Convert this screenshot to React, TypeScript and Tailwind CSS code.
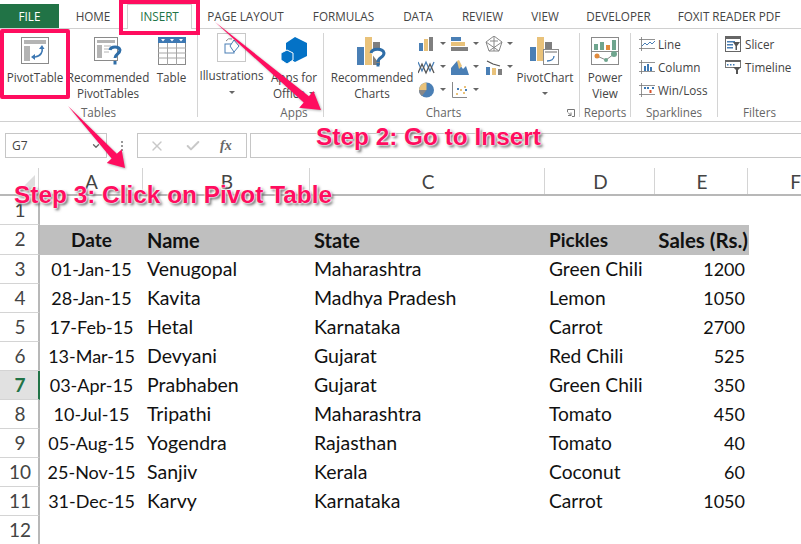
import React from 'react';
import { X, Check, ChevronDown } from 'lucide-react';

const tabs = [
  { label: 'HOME', w: 'w-[68px]' },
  { label: 'INSERT', w: 'w-[65px]', active: true },
  { label: 'PAGE LAYOUT', w: 'w-[107px]' },
  { label: 'FORMULAS', w: 'w-[89px]' },
  { label: 'DATA', w: 'w-[60px]' },
  { label: 'REVIEW', w: 'w-[69px]' },
  { label: 'VIEW', w: 'w-[56px]' },
  { label: 'DEVELOPER', w: 'w-[91px]' },
  { label: 'FOXIT READER PDF', w: 'w-[130px]' },
];

const columns = [
  { label: 'A', w: 'w-[104px]' },
  { label: 'B', w: 'w-[167px]' },
  { label: 'C', w: 'w-[235px]' },
  { label: 'D', w: 'w-[110px]' },
  { label: 'E', w: 'w-[93px]' },
  { label: 'F', w: 'w-[94px]' },
];

const sales = [
  ['01-Jan-15', 'Venugopal', 'Maharashtra', 'Green Chili', '1200'],
  ['28-Jan-15', 'Kavita', 'Madhya Pradesh', 'Lemon', '1050'],
  ['17-Feb-15', 'Hetal', 'Karnataka', 'Carrot', '2700'],
  ['13-Mar-15', 'Devyani', 'Gujarat', 'Red Chili', '525'],
  ['03-Apr-15', 'Prabhaben', 'Gujarat', 'Green Chili', '350'],
  ['10-Jul-15', 'Tripathi', 'Maharashtra', 'Tomato', '450'],
  ['05-Aug-15', 'Yogendra', 'Rajasthan', 'Tomato', '40'],
  ['25-Nov-15', 'Sanjiv', 'Kerala', 'Coconut', '60'],
  ['31-Dec-15', 'Karvy', 'Karnataka', 'Carrot', '1050'],
];

const Caret = () => <span className="inline-block w-0 h-0 border-x-[3px] border-x-transparent border-t-[3px] border-t-[#666]" />;

const Sep = () => <div className="w-px my-1 bg-[#d4d4d4] shrink-0" />;

const GroupLabel = ({ children }: { children: React.ReactNode }) => (
  <div className="h-4 leading-[15px] text-center text-[11.7px] text-[#666] whitespace-nowrap">{children}</div>
);

const BigButton = ({ w, icon, lines, caret, inlineCaret }: { w: string; icon: React.ReactNode; lines: string[]; caret?: boolean; inlineCaret?: boolean }) => (
  <div className={`${w} flex flex-col items-center shrink-0`}>
    <div className="h-[40px] pt-2 flex justify-center">{icon}</div>
    {lines.map((l, i) => (
      <div key={l} className="h-4 leading-4 text-[11.7px] text-[#444] whitespace-nowrap flex items-center gap-[4px]">
        {l}
        {inlineCaret && i === lines.length - 1 && <Caret />}
      </div>
    ))}
    {caret && <div className="h-4 flex items-center"><Caret /></div>}
  </div>
);

const PivotIcon = () => (
  <svg width="28" height="27" viewBox="0 0 28 27">
    <rect x="0.5" y="0.5" width="27" height="26" fill="#fff" stroke="#8a8a8a" />
    <rect x="3" y="3" width="22" height="4" fill="#b4b4b4" />
    <rect x="3" y="9" width="6" height="15" fill="#b4b4b4" />
    <path d="M21 10c1 5-1 9-7 10" fill="none" stroke="#3d78b3" strokeWidth="1.6" />
    <path d="M21 8l-3 4h5.500zM10 20l4-3v6z" fill="#3d78b3" />
  </svg>
);

const RecPivotIcon = () => (
  <svg width="28" height="29" viewBox="0 0 28 29">
    <rect x="0.5" y="0.500" width="23" height="23" fill="#fff" stroke="#8a8a8a" />
    <rect x="3" y="3" width="18" height="3" fill="#b4b4b4" />
    <rect x="3" y="8" width="5" height="13" fill="#b4b4b4" />
    <path d="M10 9h7M10 12h5M10 15h5" stroke="#b4b4b4" />
    <path d="M16 13c1-4 9-4 10 0 0 4-5 4-5 8" fill="none" stroke="#2f6ea8" strokeWidth="3" />
    <rect x="19.500" y="24" width="3" height="3.500" fill="#2f6ea8" />
  </svg>
);

const TableIcon = () => (
  <svg width="28" height="28" viewBox="0 0 28 28">
    <rect x="0.5" y="0.5" width="27" height="27" fill="#fff" stroke="#8a8a8a" />
    <rect x="0" y="0" width="28" height="6" fill="#3d78b3" />
    <path d="M0 11h28M0 16h28M0 21h28M9.500 6v22M18.500 6v22" stroke="#a6a6a6" />
    <path d="M3 2h4l-2 2.500zM12 2h4l-2 2.500zM21 2h4l-2 2.500z" fill="#fff" />
  </svg>
);

const ShapesIcon = () => (
  <svg width="29" height="29" viewBox="0 0 29 29">
    <rect x="0.5" y="0.5" width="28" height="28" fill="#fff" stroke="#c8c8c8" />
    <rect x="8" y="11" width="9" height="9" fill="none" stroke="#4a7fb5" />
    <path d="M17 7l5 6-5 6-4-6z" fill="#fff" stroke="#4a7fb5" />
    <path d="M9 8a5 5 0 0 1 6-2" fill="none" stroke="#888" />
  </svg>
);

const AppsIcon = () => (
  <svg width="28" height="29" viewBox="0 0 28 29">
    <path d="M15 0l12 6v13l-12 6-5-3v-7l-4-2V6z" fill="#0472c6" />
    <path d="M7 13l6 3v7l-6 4-6-4v-7z" fill="#0472c6" stroke="#fff" />
  </svg>
);

const RecChartIcon = () => (
  <svg width="30" height="30" viewBox="0 0 30 30">
    <rect x="0" y="10" width="7" height="18" fill="#4a7fb5" />
    <rect x="8" y="0" width="7" height="28" fill="#e9c27a" />
    <rect x="16" y="5" width="7" height="23" fill="#7f7f7f" />
    <path d="M14 16c1-5 12-5 13 0 0 5-6 4-6 9" fill="#fff" stroke="#2f6ea8" strokeWidth="3" />
    <rect x="19.500" y="26" width="3" height="3.500" fill="#2f6ea8" />
  </svg>
);

const PivotChartIcon = () => (
  <svg width="30" height="29" viewBox="0 0 30 29">
    <rect x="0" y="10" width="6" height="14" fill="#4a7fb5" />
    <rect x="7" y="0" width="7" height="24" fill="#e9c27a" />
    <rect x="15" y="5" width="7" height="8" fill="#7f7f7f" />
    <rect x="13.500" y="12.500" width="15" height="15" fill="#fff" stroke="#8a8a8a" />
    <rect x="15" y="14" width="12" height="2" fill="#b4b4b4" />
    <path d="M17 24c4 0 7-2 7-5" fill="none" stroke="#3d78b3" strokeWidth="1.300" />
  </svg>
);

const PowerViewIcon = () => (
  <svg width="28" height="28" viewBox="0 0 28 28">
    <rect x="0.5" y="0.5" width="27" height="27" fill="#fff" stroke="#8a8a8a" />
    <path d="M0 14.500h28" stroke="#8a8a8a" />
    <rect x="3" y="7" width="4" height="6" fill="#6fa58e" />
    <rect x="9" y="5" width="4" height="8" fill="#6fa58e" />
    <rect x="15" y="8" width="4" height="5" fill="#e08a3c" />
    <rect x="21" y="3" width="4" height="10" fill="#6fa58e" />
    <path d="M6 19l9 4 8-6" fill="none" stroke="#888" />
    <circle cx="6" cy="19" r="2.500" fill="#e08a3c" />
    <circle cx="15" cy="23" r="2" fill="#6fa58e" />
    <circle cx="23" cy="17" r="3" fill="#6fa58e" />
  </svg>
);

// the nine small chart buttons in the Charts group
const smallCharts: React.ReactNode[] = [
  <g key="col"><rect x="1" y="7" width="4" height="8" fill="#4a7fb5" /><rect x="6" y="3" width="4" height="12" fill="#e9c27a" /><rect x="11" y="1" width="4" height="14" fill="#7f7f7f" /></g>,
  <g key="bar"><rect x="0" y="1" width="10" height="4" fill="#4a7fb5" /><rect x="0" y="6" width="14" height="4" fill="#e9c27a" /><rect x="0" y="11" width="17" height="4" fill="#7f7f7f" /></g>,
  <g key="radar" fill="none" stroke="#888"><path d="M9 0l8 6-3 9H4L1 6z" /><path d="M9 0v15M1 6l13 9M17 6L4 15M5 5l8 0" /></g>,
  <g key="line" fill="none" strokeWidth="1.300"><path d="M0 3l4 9 4-9 4 9 4-9" stroke="#4a7fb5" /><path d="M0 14l4-9 4 9 4-9 4 9" stroke="#555" /></g>,
  <g key="area"><path d="M0 16V9l6-7 6 8 3-3 3 9z" fill="#4a7fb5" /><path d="M6 2l2-1 3 6-3 3z" fill="#e9c27a" /></g>,
  <g key="combo"><rect x="1" y="8" width="4" height="8" fill="#4a7fb5" /><rect x="7" y="9" width="4" height="7" fill="#e9c27a" /><rect x="13" y="10" width="4" height="6" fill="#7f7f7f" /><path d="M2 2l6 3 7 2" fill="none" stroke="#555" strokeWidth="1.300" /></g>,
  <g key="pie"><circle cx="8.500" cy="8" r="7.500" fill="#4a7fb5" /><path d="M8.500 8V.5A7.500 7.500 0 0 0 1 8z" fill="#e9c27a" /><path d="M8.500 8L1 8a7.500 7.500 0 0 0 3 6z" fill="#888" /></g>,
  <g key="scatter"><path d="M1.500 0v15.500H16" fill="none" stroke="#888" /><path d="M5 11h2v2H5zM9 7h2v2H9zM13 4h2v2h-2zM12 10h2v2h-2z" fill="#e9c27a" /><path d="M6 6h2v2H6zM14 7h2v2h-2z" fill="#4a7fb5" /></g>,
];

const Spark = ({ kind }: { kind: string }) => (
  <svg width="16" height="14" viewBox="0 0 16 14" className="shrink-0">
    <path d="M2.500 0v14M0 11.500h16M0 2.500h16" fill="none" stroke="#777" strokeWidth="0.8" />
    {kind === 'line' && <path d="M3 9l3-3 2 2 3-3 2 2 3-3" fill="none" stroke="#4a7fb5" />}
    {kind === 'column' && <path d="M5 6h2v5H5zM8 4h2v7H8zM11 7h2v4h-2z" fill="#3d78b3" />}
    {kind === 'win' && <path d="M5 4h2v2H5zM8 4h2v2H8zM13 4h2v2h-2z" fill="#3d78b3" />}
    {kind === 'win' && <rect x="10.500" y="7" width="2" height="3" fill="#d9532c" />}
  </svg>
);

const SlicerIcon = () => (
  <svg width="16" height="16" viewBox="0 0 16 16" className="shrink-0">
    <rect x="0.5" y="0.5" width="15" height="15" fill="#fff" stroke="#666" />
    <rect x="0" y="0" width="16" height="3" fill="#666" />
    <path d="M2 5h8v1.500H2zM2 8h6v1.500H2zM2 11h6v1.500H2z" fill="#4a7fb5" />
    <path d="M8 6h7l-3 4v4h-1.500v-4z" fill="#555" />
  </svg>
);

const TimelineIcon = () => (
  <svg width="16" height="14" viewBox="0 0 16 14" className="shrink-0">
    <rect x="0.5" y="0.5" width="15" height="7" fill="#fff" stroke="#777" />
    <rect x="0" y="0" width="16" height="2" fill="#666" />
    <path d="M2 4h1.500v1.500H2zM5 4h1.500v1.500H5zM8 4h1.500v1.500H8z" fill="#3d78b3" />
    <path d="M8 7h8l-3 3v4h-2v-4z" fill="#555" />
  </svg>
);

const Ribbon = () => (
  <div className="flex h-[93px] border-b border-[#d0d0d0] font-['Open_Sans',sans-serif]">
    <div className="w-[197px] shrink-0 flex flex-col">
      <div className="flex-1 flex">
        <BigButton w="w-[70px]" icon={<PivotIcon />} lines={['PivotTable']} />
        <BigButton w="w-[76px]" icon={<RecPivotIcon />} lines={['Recommended', 'PivotTables']} />
        <BigButton w="w-[51px]" icon={<TableIcon />} lines={['Table']} />
      </div>
      <GroupLabel>Tables</GroupLabel>
    </div>
    <Sep />
    <div className="w-[67px] shrink-0 flex flex-col items-center pt-1">
      <ShapesIcon />
      <div className="mt-[5px] h-4 leading-4 text-[11.7px] text-[#444]">Illustrations</div>
      <div className="mt-[5px] h-2 flex items-center"><Caret /></div>
    </div>
    <div className="w-[58px] shrink-0 flex flex-col">
      <div className="flex-1">
        <BigButton w="w-[58px]" icon={<AppsIcon />} lines={['Apps for', 'Office']} inlineCaret />
      </div>
      <GroupLabel>Apps</GroupLabel>
    </div>
    <Sep />
    <div className="w-[255px] shrink-0 flex flex-col">
      <div className="flex-1 flex">
        <BigButton w="w-[96px]" icon={<RecChartIcon />} lines={['Recommended', 'Charts']} />
        <div className="w-[100px] -ml-[2px] shrink-0 grid grid-cols-3 grid-rows-3 pt-[3px] h-[72px]">
          {smallCharts.map((c, i) => (
            <div key={i} className="flex items-center gap-[4px]">
              <svg width="18" height="16" viewBox="0 0 18 16">{c}</svg>
              <Caret />
            </div>
          ))}
        </div>
        <BigButton w="w-[54px]" icon={<PivotChartIcon />} lines={['PivotChart']} caret />
      </div>
      <div className="relative pr-[16px]">
        <GroupLabel>Charts</GroupLabel>
        <svg width="8" height="8" viewBox="0 0 8 8" className="absolute right-[4px] top-[4px]">
          <path d="M.5 3V.5H7.500V7.500H5M1 3.500L4 6.500M4 3.500v3H1" fill="none" stroke="#777" />
        </svg>
      </div>
    </div>
    <Sep />
    <div className="w-[50px] shrink-0 flex flex-col">
      <div className="flex-1">
        <BigButton w="w-[50px]" icon={<PowerViewIcon />} lines={['Power', 'View']} />
      </div>
      <GroupLabel>Reports</GroupLabel>
    </div>
    <Sep />
    <div className="w-[86px] shrink-0 flex flex-col">
      <div className="flex-1 flex flex-col gap-[7px] pl-2 pt-[7px] text-[11.7px] text-[#444]">
        {[['line', 'Line'], ['column', 'Column'], ['win', 'Win/Loss']].map(([k, t]) => (
          <div key={k} className="flex items-center gap-[3px] h-4 leading-4"><Spark kind={k} />{t}</div>
        ))}
      </div>
      <GroupLabel>Sparklines</GroupLabel>
    </div>
    <Sep />
    <div className="flex-1 flex flex-col">
      <div className="flex-1 flex flex-col gap-[7px] pl-[7px] pt-[7px] text-[11.7px] text-[#444]">
        <div className="flex items-center gap-[4px] h-4 leading-4"><SlicerIcon />Slicer</div>
        <div className="flex items-center gap-[4px] h-4 leading-4"><TimelineIcon />Timeline</div>
      </div>
      <GroupLabel>Filters</GroupLabel>
    </div>
  </div>
);

const FormulaBar = () => (
  <div className="flex items-center h-[25px] mt-[11px] pl-[5px] font-['Open_Sans',sans-serif]">
    <div className="w-[102px] h-full border border-[#c6c6c6] flex items-center justify-between pl-[6px] pr-[5px] text-[12px] text-[#444]">
      G7
      <ChevronDown size={10} strokeWidth={3} className="text-[#666]" />
    </div>
    <div className="w-[30px] flex flex-col items-center gap-[2px]">
      <i className="w-[2px] h-[2px] bg-[#999]" />
      <i className="w-[2px] h-[2px] bg-[#999]" />
      <i className="w-[2px] h-[2px] bg-[#999]" />
    </div>
    <div className="w-[110px] h-full border border-[#c6c6c6] flex items-center pl-[11px] text-[#c8c8c8]">
      <X size={16} strokeWidth={2} />
      <Check size={16} strokeWidth={3} className="ml-[20px]" />
      <span className="ml-[19px] text-[14px] font-bold italic font-['Liberation_Serif',serif] text-[#666]">fx</span>
    </div>
    <div className="ml-[3px] flex-1 h-full border-y border-l border-[#c6c6c6]" />
  </div>
);

const Sheet = () => (
  <div className="mt-[10px] font-['Lato',sans-serif] text-[19px]">
    <div className="flex h-[28px] border-b-2 border-[#b8b8b8] text-[#444]">
      <div className="w-[39px] shrink-0 border-r border-[#d4d4d4] flex items-end justify-end pr-[3px] pb-[3px]">
        <span className="w-0 h-0 border-l-[16px] border-l-transparent border-b-[16px] border-b-[#dedede]" />
      </div>
      {columns.map((c) => (
        <div key={c.label} className={`${c.w} shrink-0 border-r border-[#d4d4d4] text-center pl-[2px] leading-[28px]`}>{c.label}</div>
      ))}
    </div>
    <Row n={1} h="h-[29px]" />
    <Row n={2} h="h-[30px]" head>
      <Cells row={['Date', 'Name', 'State', 'Pickles', 'Sales (Rs.)']} head />
    </Row>
    {sales.map((r, i) => (
      <Row key={r[0]} n={i + 3} h="h-[29px]">
        <Cells row={r} />
      </Row>
    ))}
    <Row n={12} h="h-[29px]" />
  </div>
);

const Row = ({ n, h, head, children }: { n: number; h: string; head?: boolean; children?: React.ReactNode }) => (
  <div className={`flex ${h}`}>
    {n === 7 ? (
      <div className="w-[40px] shrink-0 bg-[#e1e1e1] border-b border-[#d4d4d4] border-r-2 border-r-[#217346] text-center pl-[2px] font-bold text-[#217346] leading-[28px]">{n}</div>
    ) : (
      <div className="w-[40px] shrink-0 border-b border-[#d4d4d4] border-r-2 border-r-[#b8b8b8] text-center pl-[2px] text-[#444] leading-[28px]">{n}</div>
    )}
    {children && <div className={`flex w-[709px] shrink-0 ${head ? 'bg-[#bfbfbf]' : ''}`}>{children}</div>}
  </div>
);

const Cells = ({ row, head }: { row: string[]; head?: boolean }) => {
  // Lato's digits run wider than its letters compared with the sheet's font
  const word = head ? 'text-[20px]' : 'text-[19.5px]';
  const digits = head ? 'text-[19px]' : 'text-[18px]';
  return (
    <div className={`flex w-full ${head ? 'font-bold leading-[30px]' : 'leading-[28px]'} text-[#111]`}>
      <div className={`w-[103px] shrink-0 text-center ${digits}`}>{row[0]}</div>
      <div className={`w-[167px] shrink-0 pl-1 ${word}`}>{row[1]}</div>
      <div className={`w-[235px] shrink-0 pl-1 ${word}`}>{row[2]}</div>
      <div className={`w-[110px] shrink-0 pl-1 ${head ? 'text-[19px]' : 'text-[19.2px]'}`}>{row[3]}</div>
      <div className={`w-[93px] shrink-0 text-right whitespace-nowrap ${head ? 'text-[20.5px]' : 'pr-[3px] text-[18px]'}`}>{row[4]}</div>
    </div>
  );
};

const stepText = "absolute font-['Liberation_Sans',sans-serif] font-bold text-[24.4px] leading-none whitespace-nowrap text-[#ff0d5f] [text-shadow:0_0_2px_#fff,0_0_2px_#fff,0_0_2px_#fff,2px_2px_3px_#555]";

export default function App() {
  return (
    <div className="relative w-[801px] h-[544px] overflow-hidden bg-white">
      <div className="flex h-[29px] border-b border-[#d0d0d0] pt-1 font-['Open_Sans',sans-serif] text-[11.7px] text-[#444]">
        <div className="w-[59px] h-[24px] bg-[#217346] text-white text-center leading-[24px]">FILE</div>
        {tabs.map((t) =>
          t.active ? (
            <div key={t.label} className={`${t.w} h-[25px] bg-white border-x border-t border-[#d0d0d0] text-center leading-[23px] text-[#217346]`}>{t.label}</div>
          ) : (
            <div key={t.label} className={`${t.w} text-center leading-[24px] whitespace-nowrap`}>{t.label}</div>
          )
        )}
      </div>
      <Ribbon />
      <FormulaBar />
      <Sheet />

      {/* annotations on top of the screenshot */}
      <div className="absolute left-[119px] top-0 w-[81px] h-[35px] border-[4px] border-[#ff0d5f]" />
      <div className="absolute left-0 top-[29px] w-[70px] h-[70px] border-[4px] border-[#ff0d5f] rounded-[2px]" />
      <svg width="801" height="544" className="absolute left-0 top-0 pointer-events-none drop-shadow-[1px_1px_1px_rgba(0,0,0,0.3)]">
        <polygon points="215,22 308.900,96.300 313.400,91 321,110 299.200,107.800 303.700,102.500" fill="#ff0d5f" />
        <polygon points="68,106 116.800,153.800 121.600,149.400 125,168 106.800,163 111.600,158.600" fill="#ff0d5f" />
      </svg>
      <div className={`${stepText} left-[316px] top-[125px]`}>Step 2: Go to Insert</div>
      <div className={`${stepText} left-[14px] top-[183px]`}>Step 3: Click on Pivot Table</div>
    </div>
  );
}
